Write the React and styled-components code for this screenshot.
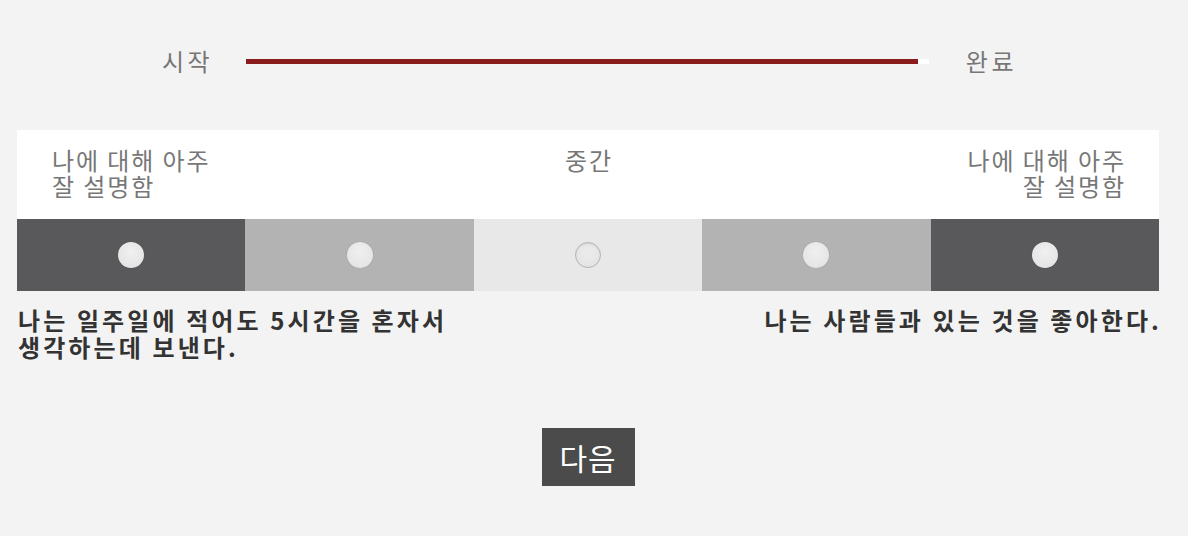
import React from "react";
import styled, { createGlobalStyle } from "styled-components";

const Global = createGlobalStyle`
  html, body {
    margin: 0;
    padding: 0;
    background: #f3f3f3;
  }
  body {
    font-family: "Noto Sans CJK KR", "Noto Sans", sans-serif;
  }
`;

const Page = styled.div`
  width: 1142px;
  margin-left: 17px;
  padding-top: 44px;
`;

const Progress = styled.div`
  display: flex;
  align-items: center;
  padding: 0 142px 0 145px;
  height: 34px;
`;

const ProgressLabel = styled.span`
  font-size: 24px;
  letter-spacing: 3.5px;
  color: #777;
  line-height: 34px;
  white-space: nowrap;
`;

const Track = styled.div`
  flex: 1;
  height: 5px;
  margin: 0 37px 0 33px;
  background: #ffffff;
  display: flex;
`;

const Fill = styled.div`
  height: 100%;
  background: #8a1c1c;
`;

const Panel = styled.div`
  margin-top: 52px;
  background: #ffffff;
  height: 89px;
  padding: 17px 33px 0 35px;
  box-sizing: border-box;
  display: grid;
  grid-template-columns: 1fr 1fr 1fr;
  align-items: start;
`;

const Anchor = styled.div`
  font-size: 24px;
  letter-spacing: 1.9px;
  line-height: 26px;
  color: #777;
  text-align: ${(p) => p.$align};
`;

const Scale = styled.div`
  display: grid;
  grid-template-columns: repeat(5, 1fr);
  height: 72px;
`;

const Cell = styled.label`
  display: flex;
  align-items: center;
  justify-content: center;
  background: ${(p) => p.$bg};
  cursor: pointer;
`;

const Dot = styled.span`
  width: 26px;
  height: 26px;
  border-radius: 50%;
  box-sizing: border-box;
  background: ${(p) =>
    p.$outlined
      ? "radial-gradient(circle at 50% 40%, #ececec 0%, #e2e2e2 100%)"
      : "radial-gradient(circle at 50% 40%, #f0f0f0 0%, #e0e0e0 100%)"};
  border: ${(p) => (p.$outlined ? "1.5px solid #b4b4b4" : "none")};
  box-shadow: ${(p) =>
    p.$outlined ? "inset 0 1px 2px rgba(0,0,0,0.08)" : "0 0 1px rgba(0,0,0,0.3)"};
`;

const Statements = styled.div`
  display: flex;
  justify-content: space-between;
  align-items: flex-start;
  margin-top: 15px;
`;

const Statement = styled.p`
  margin: 0;
  font-size: 24px;
  font-weight: 700;
  line-height: 27px;
  color: #333;
  letter-spacing: 3.1px;
  text-align: ${(p) => p.$align};
  margin-left: ${(p) => (p.$align === "left" ? "1px" : "0")};
  margin-right: ${(p) => (p.$align === "right" ? "-3px" : "0")};
`;

const Footer = styled.div`
  display: flex;
  justify-content: center;
  margin-top: 68px;
`;

const NextButton = styled.button`
  width: 93px;
  height: 58px;
  border: none;
  background: #4b4b4b;
  color: #ffffff;
  font-family: "Noto Sans CJK KR", "Noto Sans", sans-serif;
  font-size: 30px;
  letter-spacing: 1px;
  padding: 0;
  cursor: pointer;
`;

const cells = [
  { bg: "#59595b" },
  { bg: "#b3b3b3" },
  { bg: "#e8e8e8", outlined: true },
  { bg: "#b3b3b3" },
  { bg: "#59595b" },
];

export default function App() {
  return (
    <>
      <Global />
      <Page>
        <Progress>
          <ProgressLabel>시작</ProgressLabel>
          <Track>
            <Fill style={{ width: "98.4%" }} />
          </Track>
          <ProgressLabel>완료</ProgressLabel>
        </Progress>

        <Panel>
          <Anchor $align="left">
            나에 대해 아주
            <br />
            잘 설명함
          </Anchor>
          <Anchor $align="center">중간</Anchor>
          <Anchor $align="right">
            나에 대해 아주
            <br />
            잘 설명함
          </Anchor>
        </Panel>

        <Scale>
          {cells.map((c, i) => (
            <Cell key={i} $bg={c.bg}>
              <Dot $outlined={c.outlined} />
            </Cell>
          ))}
        </Scale>

        <Statements>
          <Statement $align="left">
            나는 일주일에 적어도 5시간을 혼자서
            <br />
            생각하는데 보낸다.
          </Statement>
          <Statement $align="right">나는 사람들과 있는 것을 좋아한다.</Statement>
        </Statements>

        <Footer>
          <NextButton>다음</NextButton>
        </Footer>
      </Page>
    </>
  );
}
